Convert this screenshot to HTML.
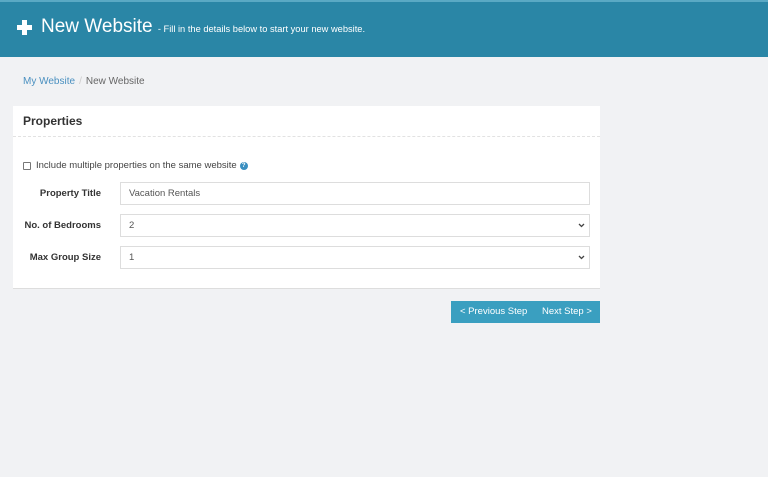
<!DOCTYPE html>
<html><head><style>
*{box-sizing:border-box;margin:0;padding:0}
body{width:768px;height:477px;background:#f1f2f4;font-family:"Liberation Sans",sans-serif;position:relative;overflow:hidden;font-size:10px;color:#333}
.hdr{position:absolute;left:0;top:0;width:768px;height:57px;background:#2a86a6;border-top:2px solid #5aa9c4}
.hdr .plus{position:absolute;left:17px;top:18px;width:15px;height:15px}
.hdr .plus:before{content:"";position:absolute;left:5px;top:0;width:5px;height:15px;background:#fff}
.hdr .plus:after{content:"";position:absolute;left:0;top:5px;width:15px;height:5px;background:#fff}
.hdr .t{position:absolute;left:41px;top:14px;color:#fff;font-size:19px;white-space:nowrap}
.hdr .t small{font-size:9.3px}
.bc{position:absolute;left:23px;top:76px;font-size:10px;color:#666}
.bc a{color:#4a90c0}
.bc span{color:#ccc;margin:0 4px}
.panel{position:absolute;left:13px;top:106px;width:587px;height:183px;background:#fff;border-bottom:1px solid #ddd}
.ph{height:31px;border-bottom:1px dashed #e2e2e2;padding:8px 10px;font-weight:bold;font-size:12px;color:#333}
.chk{position:absolute;left:10px;top:54px;font-size:9.5px;color:#444;display:flex;align-items:center}
.chk i{display:inline-block;width:8px;height:8px;border:1px solid #777;border-radius:1px;margin-right:5px}
.chk b{display:inline-block;width:8px;height:8px;border-radius:50%;background:#3a8fc0;color:#fff;font-size:6px;text-align:center;line-height:8px;margin-left:3px}
.lbl{position:absolute;width:88px;text-align:right;font-weight:bold;font-size:9.5px;color:#333}
.in{position:absolute;left:107px;width:470px;height:23px;border:1px solid #ddd;padding:0 8px;line-height:21px;font-size:9.5px;color:#555}
.in svg{position:absolute;right:4px;top:8px}
.btn{position:absolute;left:451px;top:301px;width:149px;height:22px;background:#3a9fc0;color:#fff;font-size:9.5px;line-height:22px}
.btn span{position:absolute}
</style></head><body>
<div class="hdr"><div class="plus"></div><div class="t">New Website <small>- Fill in the details below to start your new website.</small></div></div>
<div class="bc"><a>My Website</a><span>/</span>New Website</div>
<div class="panel">
<div class="ph">Properties</div>
<div class="chk"><i></i>Include multiple properties on the same website<b>?</b></div>
<div class="lbl" style="left:0;top:82px">Property Title</div>
<div class="in" style="top:76px">Vacation Rentals</div>
<div class="lbl" style="left:0;top:114px">No. of Bedrooms</div>
<div class="in" style="top:108px">2<svg width="7" height="5" viewBox="0 0 7 5"><path d="M1 1l2.5 2.5L6 1" stroke="#444" stroke-width="1.3" fill="none"/></svg></div>
<div class="lbl" style="left:0;top:146px">Max Group Size</div>
<div class="in" style="top:140px">1<svg width="7" height="5" viewBox="0 0 7 5"><path d="M1 1l2.5 2.5L6 1" stroke="#444" stroke-width="1.3" fill="none"/></svg></div>
</div>
<div class="btn"><span style="left:9px">&lt; Previous Step</span><span style="left:91px">Next Step &gt;</span></div>
</body></html>
